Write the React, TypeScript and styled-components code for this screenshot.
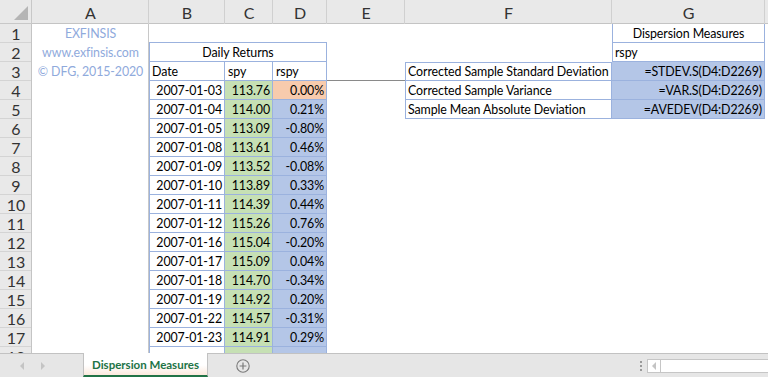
import React from 'react'
import styled, { createGlobalStyle } from 'styled-components'

const BLUE_LINE = '#9bb2de'
const GREEN = '#c6e0b4'
const BLUE = '#b4c6e7'
const ORANGE = '#f8cbad'

const Global = createGlobalStyle`
  html, body { margin: 0; padding: 0; background: #fff; overflow: hidden; }
  body { font-family: Lato, "Noto Sans", sans-serif; }
`

const Window = styled.div`
  width: 768px;
  height: 377px;
  display: flex;
  flex-direction: column;
  overflow: hidden;
`

const Sheet = styled.div`
  height: 353px;
  overflow: hidden;
  display: grid;
  grid-template-columns: 32px 117px 76px 48px 54px 78px 207px 153px 1fr;
  grid-template-rows: 24px repeat(18, 19px);
`

const Corner = styled.div`
  background: #e9e9e9;
  box-shadow: inset -1px -1px 0 #c8c8c8;
  position: relative;
  &::after {
    content: '';
    position: absolute;
    right: 4px;
    bottom: 4px;
    border-style: solid;
    border-width: 0 0 14px 14px;
    border-color: transparent transparent #b5b5b5 transparent;
  }
`

const ColHead = styled.div`
  background: #e9e9e9;
  box-shadow: inset -1px 0 0 #d0d0d0, inset 0 -1px 0 #c4c4c4;
  display: flex;
  align-items: center;
  justify-content: center;
  font-size: 16px;
  color: #333;
`

const RowHead = styled.div`
  background: #e9e9e9;
  box-shadow: inset -1px 0 0 #c4c4c4, inset 0 -1px 0 #d4d4d4;
  display: flex;
  align-items: center;
  justify-content: center;
  font-size: 16px;
  color: #333;
`

const edgeShadow = (edges: string, color: string) => {
  const parts: string[] = []
  if (edges.includes('t')) parts.push(`inset 0 1px 0 ${color}`)
  if (edges.includes('b')) parts.push(`inset 0 -1px 0 ${color}`)
  if (edges.includes('l')) parts.push(`inset 1px 0 0 ${color}`)
  if (edges.includes('r')) parts.push(`inset -1px 0 0 ${color}`)
  return parts.length ? parts.join(', ') : 'none'
}

const Cell = styled.div<{
  $fill?: string
  $align?: 'left' | 'right' | 'center'
  $edges?: string
  $lineColor?: string
  $tone?: string
  $span?: number
}>`
  grid-column: span ${p => p.$span ?? 1};
  display: flex;
  align-items: center;
  justify-content: ${p => (p.$align === 'right' ? 'flex-end' : p.$align === 'center' ? 'center' : 'flex-start')};
  padding: 0 3px;
  background: ${p => p.$fill ?? '#fff'};
  box-shadow: ${p => edgeShadow(p.$edges ?? '', p.$lineColor ?? BLUE_LINE)};
  font-size: 12.4px;
  letter-spacing: -0.1px;
  color: ${p => p.$tone ?? '#000'};
  white-space: nowrap;
  overflow: visible;
`

const TabBar = styled.div`
  height: 24px;
  background: #e6e6e6;
  border-top: 1px solid #c2c2c2;
  box-sizing: border-box;
  display: flex;
  align-items: stretch;
`

const NavArea = styled.div`
  width: 83px;
  display: flex;
  align-items: center;
  gap: 17px;
  padding-left: 20px;
  box-sizing: border-box;
`

const Arrow = styled.span<{ $dir: 'left' | 'right' }>`
  width: 0;
  height: 0;
  border-top: 4px solid transparent;
  border-bottom: 4px solid transparent;
  ${p => (p.$dir === 'left' ? 'border-right: 4px solid #c4c4c4;' : 'border-left: 4px solid #c4c4c4;')}
`

const Tab = styled.div`
  width: 125px;
  margin-top: -1px;
  background: linear-gradient(#ffffff 55%, #fbe9dd);
  border-left: 1px solid #c2c2c2;
  border-right: 1px solid #c2c2c2;
  border-bottom: 2px solid #217346;
  box-sizing: border-box;
  display: flex;
  align-items: center;
  justify-content: center;
  font-size: 11.5px;
  font-weight: 700;
  color: #217346;
`

const AddSheet = styled.div`
  width: 70px;
  display: flex;
  align-items: center;
  justify-content: center;
`

const Spacer = styled.div`
  flex: 1;
`

const Dots = styled.div`
  width: 13px;
  display: flex;
  flex-direction: column;
  align-items: center;
  justify-content: center;
  gap: 2px;
  & > span {
    width: 2px;
    height: 2px;
    background: #9a9a9a;
  }
`

const Scroll = styled.div`
  width: 121px;
  display: flex;
  align-items: center;
`

const ScrollButton = styled.div`
  width: 12px;
  height: 12px;
  background: #fff;
  border: 1px solid #c6c6c6;
  display: flex;
  align-items: center;
  justify-content: center;
`

const Track = styled.div`
  flex: 1;
  height: 12px;
  background: #fff;
  border-top: 1px solid #c6c6c6;
  border-bottom: 1px solid #c6c6c6;
`

type Row = { date: string; spy: string; rspy: string }

const data: Row[] = [
  { date: '2007-01-03', spy: '113.76', rspy: '0.00%' },
  { date: '2007-01-04', spy: '114.00', rspy: '0.21%' },
  { date: '2007-01-05', spy: '113.09', rspy: '-0.80%' },
  { date: '2007-01-08', spy: '113.61', rspy: '0.46%' },
  { date: '2007-01-09', spy: '113.52', rspy: '-0.08%' },
  { date: '2007-01-10', spy: '113.89', rspy: '0.33%' },
  { date: '2007-01-11', spy: '114.39', rspy: '0.44%' },
  { date: '2007-01-12', spy: '115.26', rspy: '0.76%' },
  { date: '2007-01-16', spy: '115.04', rspy: '-0.20%' },
  { date: '2007-01-17', spy: '115.09', rspy: '0.04%' },
  { date: '2007-01-18', spy: '114.70', rspy: '-0.34%' },
  { date: '2007-01-19', spy: '114.92', rspy: '0.20%' },
  { date: '2007-01-22', spy: '114.57', rspy: '-0.31%' },
  { date: '2007-01-23', spy: '114.91', rspy: '0.29%' },
  { date: '', spy: '', rspy: '' },
]

const measures = [
  { label: 'Corrected Sample Standard Deviation', formula: '=STDEV.S(D4:D2269)' },
  { label: 'Corrected Sample Variance', formula: '=VAR.S(D4:D2269)' },
  { label: 'Sample Mean Absolute Deviation', formula: '=AVEDEV(D4:D2269)' },
]

const brand = ['EXFINSIS', 'www.exfinsis.com', '© DFG, 2015-2020']
const BRAND = '#8faadc'
const SEP = '#c8c8c8'

const App = () => {
  return (
    <Window>
      <Global />
      <Sheet>
        <Corner />
        {['A', 'B', 'C', 'D', 'E', 'F', 'G', ''].map(c => (
          <ColHead key={c}>{c}</ColHead>
        ))}

        {/* row 1 */}
        <RowHead>1</RowHead>
        <Cell $align="center" $tone={BRAND} $edges="r" $lineColor={SEP}>{brand[0]}</Cell>
        <Cell $edges="b" />
        <Cell $edges="b" />
        <Cell $edges="b" />
        <Cell />
        <Cell />
        <Cell $align="center" $edges="lrb">Dispersion Measures</Cell>
        <Cell />

        {/* row 2 */}
        <RowHead>2</RowHead>
        <Cell $align="center" $tone={BRAND} $edges="r" $lineColor={SEP}>{brand[1]}</Cell>
        <Cell $span={3} $align="center" $edges="lrb">Daily Returns</Cell>
        <Cell />
        <Cell />
        <Cell $edges="lrb">rspy</Cell>
        <Cell />

        {/* row 3 */}
        <RowHead>3</RowHead>
        <Cell $align="center" $tone={BRAND} $edges="r" $lineColor={SEP}>{brand[2]}</Cell>
        <Cell $edges="lrb">Date</Cell>
        <Cell $edges="rb">spy</Cell>
        <Cell $edges="rb">rspy</Cell>
        <Cell $edges="b" $lineColor="#8a8a8a" />
        <Cell $edges="tlrb">{measures[0].label}</Cell>
        <Cell $align="right" $fill={BLUE} $edges="rb">{measures[0].formula}</Cell>
        <Cell />

        {data.map((r, i) => {
          const m = measures[i + 1]
          return (
            <React.Fragment key={i}>
              <RowHead>{i + 4}</RowHead>
              <Cell $edges="r" $lineColor={SEP} />
              <Cell $align="right" $edges="lrb">{r.date}</Cell>
              <Cell $align="right" $fill={GREEN} $edges="rb">{r.spy}</Cell>
              <Cell $align="right" $fill={i === 0 ? ORANGE : BLUE} $edges="rb">{r.rspy}</Cell>
              <Cell />
              {m ? <Cell $edges="lrb">{m.label}</Cell> : <Cell />}
              {m ? <Cell $align="right" $fill={BLUE} $edges="rb">{m.formula}</Cell> : <Cell />}
              <Cell />
            </React.Fragment>
          )
        })}
      </Sheet>

      <TabBar>
        <NavArea>
          <Arrow $dir="left" />
          <Arrow $dir="right" />
        </NavArea>
        <Tab>Dispersion Measures</Tab>
        <AddSheet>
          <svg width="14" height="14" viewBox="0 0 14 14">
            <circle cx="7" cy="7" r="6.2" fill="none" stroke="#7a7a7a" strokeWidth="1.1" />
            <path d="M7 3.6v6.8M3.6 7h6.8" stroke="#7a7a7a" strokeWidth="1.2" />
          </svg>
        </AddSheet>
        <Spacer />
        <Dots>
          <span />
          <span />
          <span />
        </Dots>
        <Scroll>
          <ScrollButton>
            <Arrow $dir="left" />
          </ScrollButton>
          <Track />
        </Scroll>
      </TabBar>
    </Window>
  )
}

export default App
